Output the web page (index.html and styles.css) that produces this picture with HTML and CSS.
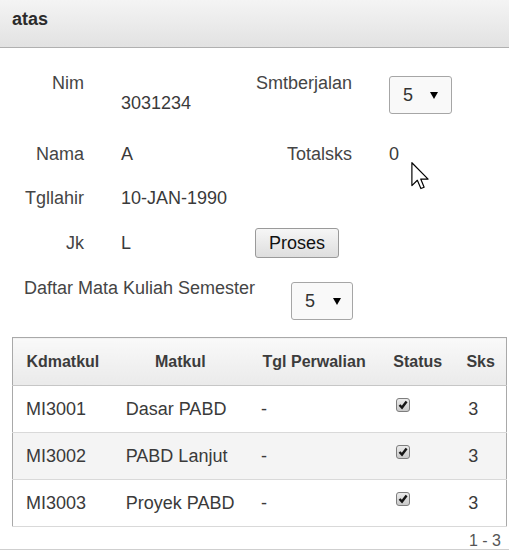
FILE: index.html
```html
<!DOCTYPE html>
<html lang="id">
<head>
<meta charset="utf-8">
<title>atas</title>
<link rel="stylesheet" href="styles.css">
</head>
<body>
<div class="panel-header">atas</div>

<div class="form-grid">
  <div class="lbl">Nim</div>
  <div class="val val-low">3031234</div>
  <div class="lbl">Smtberjalan</div>
  <div class="cell-select"><div class="fake-select" role="combobox"><span>5</span><svg class="arrow" width="8" height="7" viewBox="0 0 8 7"><path d="M0 0 H8 L4 7 Z" fill="#000"/></svg></div></div>

  <div class="lbl">Nama</div>
  <div class="val">A</div>
  <div class="lbl">Totalsks</div>
  <div class="val">0</div>

  <div class="lbl">Tgllahir</div>
  <div class="val">10-JAN-1990</div>
  <div></div>
  <div></div>

  <div class="lbl mid">Jk</div>
  <div class="val mid">L</div>
  <div class="btn-cell"><button class="btn" type="button">Proses</button></div>
  <div></div>
</div>

<div class="semester-row">
  <div class="semester-label">Daftar Mata Kuliah Semester</div>
  <div class="fake-select small" role="combobox"><span>5</span><svg class="arrow" width="8" height="7" viewBox="0 0 8 7"><path d="M0 0 H8 L4 7 Z" fill="#000"/></svg></div>
</div>

<table class="grid">
  <colgroup>
    <col class="c1"><col class="c2"><col class="c3"><col class="c4"><col class="c5">
  </colgroup>
  <thead>
    <tr><th>Kdmatkul</th><th>Matkul</th><th>Tgl Perwalian</th><th>Status</th><th>Sks</th></tr>
  </thead>
  <tbody>
    <tr><td>MI3001</td><td>Dasar PABD</td><td>-</td><td class="status"><span class="chk"><svg width="12" height="12" viewBox="0 0 12 12"><path d="M2.5 6 L5 8.6 L9.6 2.6" stroke="#151515" stroke-width="2.4" fill="none"/></svg></span></td><td>3</td></tr>
    <tr class="alt"><td>MI3002</td><td>PABD Lanjut</td><td>-</td><td class="status"><span class="chk"><svg width="12" height="12" viewBox="0 0 12 12"><path d="M2.5 6 L5 8.6 L9.6 2.6" stroke="#151515" stroke-width="2.4" fill="none"/></svg></span></td><td>3</td></tr>
    <tr><td>MI3003</td><td>Proyek PABD</td><td>-</td><td class="status"><span class="chk"><svg width="12" height="12" viewBox="0 0 12 12"><path d="M2.5 6 L5 8.6 L9.6 2.6" stroke="#151515" stroke-width="2.4" fill="none"/></svg></span></td><td>3</td></tr>
  </tbody>
</table>

<div class="pager">1 - 3</div>

<svg class="cursor" width="18" height="28" viewBox="0 0 12 19"><path d="M0.5 0.5 L0.5 16 L4.2 12.4 L6.6 18 L8.8 17.1 L6.5 11.6 L11.5 11.6 Z" fill="#fff" stroke="#000" stroke-width="0.8" stroke-linejoin="round"/></svg>
</body>
</html>
```

FILE: styles.css
```css
html, body {
  margin: 0;
  padding: 0;
  background: #fff;
}
body {
  font-family: "Liberation Sans", Arial, sans-serif;
  font-size: 18px;
  line-height: 21px;
  color: #454545;
  width: 509px;
  height: 551px;
  overflow: hidden;
}

.panel-header {
  height: 38px;
  padding: 9px 12px 0;
  font-weight: bold;
  color: #2b2b2b;
  background: linear-gradient(#f4f4f4, #e2e2e2);
  border-bottom: 1px solid #b0b0b0;
}

.form-grid {
  display: grid;
  grid-template-columns: 97px 134px 134px auto;
  grid-template-rows: 71px 44px 40px 30px;
  padding: 25px 0 0 24px;
}
.lbl {
  text-align: right;
  padding-right: 37px;
  align-self: start;
}
.val {
  align-self: start;
  color: #3a3a3a;
}
.val-low { margin-top: 20px; }
.mid { align-self: center; }
.cell-select { align-self: start; padding-top: 3px; }
.btn-cell { align-self: start; }

.fake-select {
  box-sizing: border-box;
  width: 63px;
  height: 38px;
  display: flex;
  align-items: center;
  justify-content: space-between;
  padding: 0 13px 0 13px;
  border: 1px solid #a6a6a6;
  border-radius: 3px;
  background: #f9f9f9;
  color: #333;
}
.fake-select.small { width: 62px; margin-top: 4px; padding-right: 11px; }
.arrow { display: block; }

.btn {
  box-sizing: border-box;
  width: 84px;
  height: 30px;
  padding: 0;
  font-family: inherit;
  font-size: 18px;
  line-height: 21px;
  color: #111;
  border: 1px solid #9a9a9a;
  border-radius: 3px;
  background: linear-gradient(#f6f6f6, #dedede);
}

.semester-row {
  display: flex;
  align-items: flex-start;
  gap: 36px;
  padding-left: 24px;
  margin-top: 20px;
}

.grid {
  margin: 17px 0 0 12px;
  width: 495px;
  table-layout: fixed;
  border-collapse: collapse;
  border: 1px solid #a9a9a9;
  color: #3a3a3a;
}
.c1 { width: 100px; }
.c2 { width: 135px; }
.c3 { width: 132px; }
.c4 { width: 75px; }
.c5 { width: 51px; }

.grid th {
  height: 47px;
  padding: 0;
  font-size: 16px;
  font-weight: bold;
  text-align: center;
  vertical-align: middle;
  color: #3c3c3c;
  background: linear-gradient(#f9f9f9, #eaeaea);
  border-bottom: 1px solid #c6c6c6;
  white-space: nowrap;
}
.grid td {
  height: 46px;
  padding: 0 0 0 13px;
  text-align: left;
  vertical-align: middle;
  border-bottom: 1px solid #d9d9d9;
  white-space: nowrap;
}
.grid tr.alt td { background: #f4f4f4; }
.grid td.status {
  height: 34px;
  vertical-align: top;
  padding-top: 12px;
  padding-left: 16px;
}
.chk {
  box-sizing: border-box;
  display: block;
  width: 14px;
  height: 14px;
  border: 1px solid #7e7e7e;
  border-radius: 3px;
  background: linear-gradient(#ebebeb, #c9c9c9);
}
.chk svg { display: block; }

.pager {
  margin-top: 5px;
  padding-right: 8px;
  text-align: right;
  font-size: 16px;
  line-height: 17px;
  color: #555;
  border-bottom: 1px solid #cfcfcf;
}

.cursor {
  position: absolute;
  left: 411px;
  top: 162px;
}
```
